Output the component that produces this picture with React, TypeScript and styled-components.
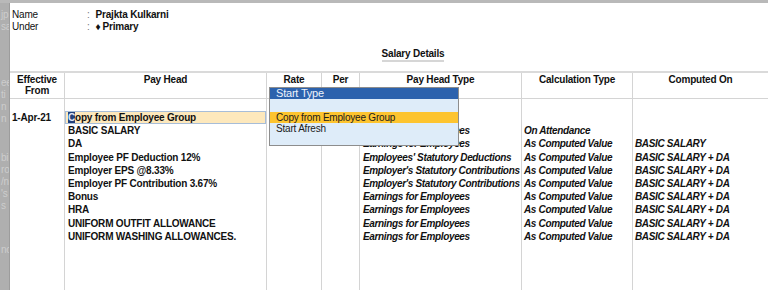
import React from 'react'
import styled, { createGlobalStyle } from 'styled-components';

const GlobalStyle = createGlobalStyle`
    html, body {
        margin: 0;
        padding: 0;
        background: #ffffff;
    }
    body {
        font-family: "Liberation Sans", Arial, sans-serif;
        font-size: 10px;
        letter-spacing: -0.2px;
        color: #111;
    }
`;

const Screen = styled.div`
    position: relative;
    width: 768px;
    height: 290px;
    overflow: hidden;
    display: flex;
    flex-direction: column;
    background: #fff;
`;

const TopBar = styled.div`
    height: 3px;
    flex-shrink: 0;
    background: #b9b9b9;
`;

const Body = styled.div`
    flex: 1;
    display: flex;
    min-height: 0;
`;

const SideStrip = styled.div`
    width: 9px;
    flex-shrink: 0;
    background: #afafaf;
    border-right: 1px solid #9c9c9c;
    overflow: hidden;
    display: flex;
    flex-direction: column;
    color: #cdcdcd;
    font-size: 10px;
    line-height: 12px;
    white-space: nowrap;
`;

const StripText = styled.div<{ $gap: number }>`
    margin-top: ${p => p.$gap}px;
    height: 12px;
    padding-left: 1px;
`;

const Main = styled.div`
    flex: 1;
    display: flex;
    flex-direction: column;
    min-width: 0;
`;

const InfoBlock = styled.div`
    padding: 6px 0 0 2px;
    line-height: 12px;
`;

const InfoRow = styled.div`
    display: flex;
    height: 12px;
`;

const InfoLabel = styled.div`
    width: 75px;
`;

const Colon = styled.span`
    color: #777;
    margin-right: 6px;
`;

const InfoValue = styled.div`
    font-weight: bold;
    display: flex;
    align-items: center;
`;

const Diamond = styled.span`
    font-size: 10px;
    line-height: 10px;
    margin-right: 2px;
`;

const SectionTitle = styled.div`
    margin-top: 15px;
    padding-left: 48px;
    text-align: center;
    line-height: 12px;
`;

const TitleText = styled.span`
    display: inline-block;
    font-weight: bold;
    border-bottom: 2px solid #d6d6d6;
`;

const Table = styled.div`
    margin-top: 9px;
    flex: 1;
    display: flex;
    border-top: 2px solid #dadada;
`;

const Column = styled.div<{ $width?: number; $first?: boolean }>`
    box-sizing: border-box;
    ${p => p.$width ? `width: ${p.$width}px; flex-shrink: 0;` : 'flex: 1;'}
    border-left: ${p => p.$first ? 'none' : '1px solid #d4d4d4'};
    display: flex;
    flex-direction: column;
    min-width: 0;
`;

const HeaderCell = styled.div`
    height: 24px;
    box-sizing: content-box;
    padding-top: 1px;
    border-bottom: 1px solid #d4d4d4;
    text-align: center;
    font-weight: bold;
    line-height: 11px;
`;

const Cells = styled.div`
    padding-top: 12px;
    display: flex;
    flex-direction: column;
`;

const Cell = styled.div<{ $italic?: boolean; $pad?: number }>`
    height: 13.2px;
    line-height: 13.2px;
    padding-left: ${p => p.$pad ?? 3}px;
    font-weight: bold;
    font-style: ${p => p.$italic ? 'italic' : 'normal'};
    letter-spacing: ${p => p.$italic ? '-0.35px' : '-0.2px'};
    white-space: nowrap;
`;

const InputBox = styled.div`
    box-sizing: border-box;
    height: 13.2px;
    line-height: 11px;
    border: 1px solid #a7bdd8;
    background: #fde8bc;
    padding-left: 2px;
    font-weight: bold;
    white-space: nowrap;
`;

const Caret = styled.span`
    background: #22407a;
    color: #dfe7f7;
`;

const Popup = styled.div`
    position: absolute;
    left: 269px;
    top: 87px;
    width: 190px;
    height: 59px;
    box-sizing: border-box;
    border: 1px solid #8d8d8d;
    background: #deecf9;
    z-index: 2;
`;

const PopupTitle = styled.div`
    height: 11px;
    line-height: 11px;
    background: #2c62ad;
    color: #eef3fb;
    font-size: 11px;
    padding-left: 6px;
`;

const PopupItem = styled.div<{ $selected?: boolean }>`
    height: 11px;
    line-height: 11px;
    padding-left: 6px;
    color: #1b1b1b;
    background: ${p => p.$selected ? '#fdc42f' : 'transparent'};
`;

const PopupSpacer = styled.div`
    height: 13px;
`;

type Row = { head: string; type?: string; calc?: string; on?: string };

const rows: Row[] = [
    { head: 'Copy from Employee Group' },
    { head: 'BASIC SALARY', type: 'Earnings for Employees', calc: 'On Attendance', on: '' },
    { head: 'DA', type: 'Earnings for Employees', calc: 'As Computed Value', on: 'BASIC SALARY' },
    { head: 'Employee PF Deduction 12%', type: "Employees' Statutory Deductions", calc: 'As Computed Value', on: 'BASIC SALARY + DA' },
    { head: 'Employer EPS @8.33%', type: "Employer's Statutory Contributions", calc: 'As Computed Value', on: 'BASIC SALARY + DA' },
    { head: 'Employer PF Contribution 3.67%', type: "Employer's Statutory Contributions", calc: 'As Computed Value', on: 'BASIC SALARY + DA' },
    { head: 'Bonus', type: 'Earnings for Employees', calc: 'As Computed Value', on: 'BASIC SALARY + DA' },
    { head: 'HRA', type: 'Earnings for Employees', calc: 'As Computed Value', on: 'BASIC SALARY + DA' },
    { head: 'UNIFORM OUTFIT ALLOWANCE', type: 'Earnings for Employees', calc: 'As Computed Value', on: 'BASIC SALARY + DA' },
    { head: 'UNIFORM WASHING ALLOWANCES.', type: 'Earnings for Employees', calc: 'As Computed Value', on: 'BASIC SALARY + DA' },
];

const stripLines = [
    { text: 'jp', gap: 6 }, { text: 'sal', gap: 0 },
    { text: 'ee', gap: 44 }, { text: 'ti', gap: 0 }, { text: 'n', gap: 0 }, { text: 'n', gap: 0 },
    { text: 'bi', gap: 27 }, { text: 'ro', gap: 0 }, { text: '/n', gap: 0 }, { text: "'s", gap: 0 }, { text: 's', gap: 0 },
    { text: 'no', gap: 32 },
];

const App = () => {
    return (
        <Screen>
            <GlobalStyle />
            <TopBar />
            <Body>
                <SideStrip>
                    {stripLines.map((l, i) => <StripText key={i} $gap={l.gap}>{l.text}</StripText>)}
                </SideStrip>
                <Main>
                    <InfoBlock>
                        <InfoRow>
                            <InfoLabel>Name</InfoLabel>
                            <Colon>:</Colon>
                            <InfoValue>Prajkta Kulkarni</InfoValue>
                        </InfoRow>
                        <InfoRow>
                            <InfoLabel>Under</InfoLabel>
                            <Colon>:</Colon>
                            <InfoValue><Diamond>♦</Diamond>Primary</InfoValue>
                        </InfoRow>
                    </InfoBlock>
                    <SectionTitle><TitleText>Salary Details</TitleText></SectionTitle>
                    <Table>
                        <Column $width={54} $first>
                            <HeaderCell>Effective<br />From</HeaderCell>
                            <Cells><Cell $pad={2}>1-Apr-21</Cell></Cells>
                        </Column>
                        <Column $width={202}>
                            <HeaderCell>Pay Head</HeaderCell>
                            <Cells>
                                {rows.map((r, i) => i === 0
                                    ? <InputBox key={r.head}><Caret>C</Caret>{r.head.slice(1)}</InputBox>
                                    : <Cell key={r.head}>{r.head}</Cell>)}
                            </Cells>
                        </Column>
                        <Column $width={55}>
                            <HeaderCell>Rate</HeaderCell>
                        </Column>
                        <Column $width={38}>
                            <HeaderCell>Per</HeaderCell>
                        </Column>
                        <Column $width={162}>
                            <HeaderCell>Pay Head Type</HeaderCell>
                            <Cells>
                                {rows.map((r, i) => <Cell key={i} $italic>{r.type}</Cell>)}
                            </Cells>
                        </Column>
                        <Column $width={111}>
                            <HeaderCell>Calculation Type</HeaderCell>
                            <Cells>
                                {rows.map((r, i) => <Cell key={i} $italic $pad={2}>{r.calc}</Cell>)}
                            </Cells>
                        </Column>
                        <Column>
                            <HeaderCell>Computed On</HeaderCell>
                            <Cells>
                                {rows.map((r, i) => <Cell key={i} $italic $pad={2}>{r.on}</Cell>)}
                            </Cells>
                        </Column>
                    </Table>
                </Main>
            </Body>
            <Popup>
                <PopupTitle>Start Type</PopupTitle>
                <PopupSpacer />
                <PopupItem $selected>Copy from Employee Group</PopupItem>
                <PopupItem>Start Afresh</PopupItem>
            </Popup>
        </Screen>
    )
}

export default App;
